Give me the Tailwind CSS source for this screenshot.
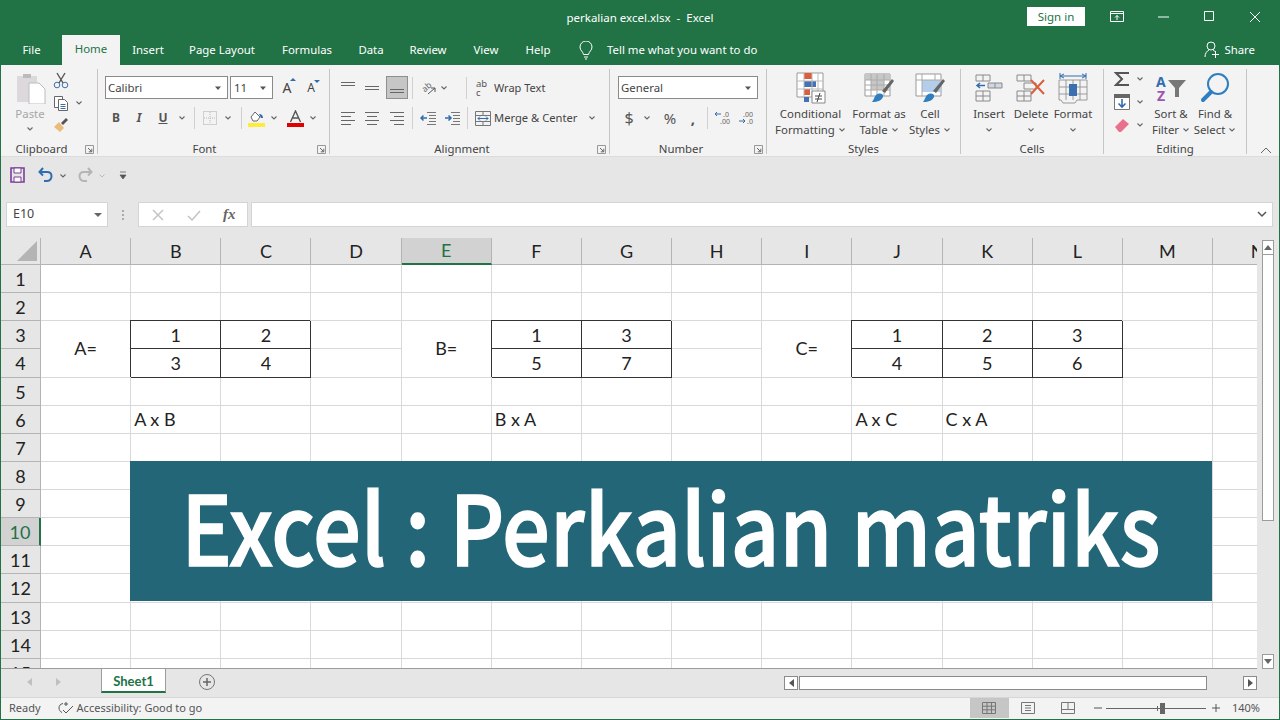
<!DOCTYPE html>
<html>
<head>
<meta charset="utf-8">
<title>perkalian excel.xlsx - Excel</title>
<script src="https://cdn.jsdelivr.net/npm/@tailwindcss/browser@4"></script>
</head>
<body class="m-0 overflow-hidden">
<svg class="hidden">
  <symbol id="chev" viewBox="0 0 8 6"><path d="M1.5 1.5 4 4l2.5-2.5" fill="none" stroke="#666" stroke-width="1.1"/></symbol>
  <symbol id="drop" viewBox="0 0 8 6"><path d="M1 1.5h6L4 5z" fill="#555"/></symbol>
  <symbol id="launch" viewBox="0 0 9 9"><path d="M.5.5h8v8h-8z" fill="none" stroke="#999"/><path d="M3 3l3.5 3.5M6.8 3.8v3H3.8" fill="none" stroke="#666"/></symbol>
  <symbol id="lines-top" viewBox="0 0 16 16"><path d="M1 2.500h14M1 5.500h14" stroke="#666" fill="none"/></symbol>
  <symbol id="lines-mid" viewBox="0 0 16 16"><path d="M1 6.500h14M1 9.500h14" stroke="#666" fill="none"/></symbol>
  <symbol id="lines-bot" viewBox="0 0 16 16"><path d="M1 9.500h14M1 12.500h14" stroke="#666" fill="none"/></symbol>
  <symbol id="al-left" viewBox="0 0 16 16"><path d="M1 2.500h14M1 6.500h10M1 10.500h14M1 14.500h10" stroke="#666" fill="none"/></symbol>
  <symbol id="al-center" viewBox="0 0 16 16"><path d="M1 2.500h14M3 6.500h10M1 10.500h14M3 14.500h10" stroke="#666" fill="none"/></symbol>
  <symbol id="al-right" viewBox="0 0 16 16"><path d="M1 2.500h14M5 6.500h10M1 10.500h14M5 14.500h10" stroke="#666" fill="none"/></symbol>
</svg>

<div class="w-[1280px] h-[720px] bg-[#217346] p-[1px] flex flex-col overflow-hidden text-[11.4px] text-[#444] font-['Noto_Sans',sans-serif]">

  <!-- title bar -->
  <div class="h-[35px] shrink-0 relative flex items-center justify-end text-white">
    <div class="absolute left-0 right-0 top-[8px] text-center text-[11.5px] leading-[18px] whitespace-pre">perkalian excel.xlsx  -  Excel</div>
    <div class="w-[58px] h-[19px] bg-white text-[#217346] text-[11.5px] leading-[19px] text-center mb-[4px]">Sign in</div>
    <div class="flex items-center mb-[4px]">
      <div class="w-[46px] ml-[9px] flex justify-center"><svg width="14" height="12" viewBox="0 0 14 12" fill="none" stroke="#fff"><path d="M.5.5h13v10H.5zM.5 2.500h13M7 9V4.500M5 6.500l2-2 2 2"/></svg></div>
      <div class="w-[46px] flex justify-center"><svg width="11" height="2"><path d="M0 1h11" stroke="#fff"/></svg></div>
      <div class="w-[46px] flex justify-center"><svg width="11" height="11"><path d="M.5.5h9v9h-9z" fill="none" stroke="#fff"/></svg></div>
      <div class="w-[46px] flex justify-center mr-[1px]"><svg width="12" height="12"><path d="M1 1l10 10M11 1 1 11" stroke="#fff"/></svg></div>
    </div>
  </div>

  <!-- ribbon tabs -->
  <div class="h-[29px] shrink-0 flex items-end text-white leading-[27px] relative">
    <div class="w-[61px] text-center h-[29px]">File</div>
    <div class="w-[58px] h-[30px] bg-[#f3f3f3] text-[#217346] text-center leading-[28px]">Home</div>
    <div class="w-[56px] text-center h-[29px]">Insert</div>
    <div class="w-[92px] text-center h-[29px]">Page Layout</div>
    <div class="w-[78px] text-center h-[29px]">Formulas</div>
    <div class="w-[50px] text-center h-[29px]">Data</div>
    <div class="w-[64px] text-center h-[29px]">Review</div>
    <div class="w-[52px] text-center h-[29px]">View</div>
    <div class="w-[52px] text-center h-[29px]">Help</div>
    <div class="w-[42px] h-[29px] flex justify-center pt-[5px] ml-[1px]"><svg width="14" height="19" viewBox="0 0 14 19" fill="none" stroke="#fff"><path d="M4.500 13.500C4 10.500 1 9.500 1 6a6 6 0 0 1 12 0c0 3.500-3 4.500-3.500 7.500zM5 16h4M6 18h2"/></svg></div>
    <div class="h-[29px]">Tell me what you want to do</div>
    <div class="flex-1"></div>
    <div class="h-[29px] flex items-center gap-[4px] pb-[2px] mr-[24px]">
      <svg width="16" height="17" viewBox="0 0 16 17" fill="none" stroke="#fff"><circle cx="7" cy="5" r="4"/><path d="M1 16c0-4 2-6 4-7M9 9c1 .3 2 1 2.500 2M8 13.500h7M11.500 10v7"/></svg>
      <span>Share</span>
    </div>
  </div>

  <!-- ribbon -->
  <div class="h-[92px] shrink-0 bg-[#f3f3f3] flex pt-[4px] pl-[1px] border-b border-[#dcdcdc]">

    <!-- clipboard -->
    <div class="w-[96px] h-[85px] border-r border-[#c6c6c6] flex flex-col">
      <div class="h-[76px] flex">
        <div class="w-[44px] ml-[6px] flex flex-col items-center pt-[3px]">
          <svg class="ml-[2px] shrink-0" width="30" height="32" viewBox="0 0 30 32"><path d="M1 4h20v26H1z" fill="#dcd8dc"/><path d="M7 2h8v4H7z" fill="#bbb"/><path d="M13 11h10l6 6v15H13z" fill="#fff" stroke="#bcbcbc"/></svg>
          <div class="leading-[16px] mt-[2px] text-[#a6a6a6]">Paste</div>
          <svg class="mt-[4px]" width="8" height="6"><use href="#chev"/></svg>
        </div>
        <div class="flex flex-col pt-[3px] gap-[6px] ml-[1px]">
          <svg width="16" height="17" viewBox="0 0 16 17" fill="none"><path d="M4 1l6 10M12 1 6 11" stroke="#555" stroke-width="1.400"/><circle cx="4" cy="13" r="2.800" stroke="#3f6fa8"/><circle cx="12" cy="13" r="2.800" stroke="#3f6fa8"/></svg>
          <div class="flex items-center gap-[6px]">
            <svg width="16" height="16" viewBox="0 0 16 16" fill="#fff" stroke="#666"><path d="M1.500 1.500h8v11h-8z"/><path d="M5.500 4.500h6l3 3v8h-9z"/><path d="M7.500 9.500h5M7.500 11.500h5M7.500 13.500h5" stroke="#3f6fa8"/></svg>
            <svg width="8" height="6"><use href="#chev"/></svg>
          </div>
          <svg width="16" height="16" viewBox="0 0 16 16"><path d="M1 10l5-5 5 6-4 4z" fill="#e8bd7c"/><path d="M8 6l5-5 2 2-5 5z" fill="#555"/></svg>
        </div>
      </div>
      <div class="h-[10px] relative flex items-center justify-center pr-[16px]">
        <span class="leading-[10px]">Clipboard</span>
        <svg class="absolute right-[3px] top-[1px]" width="9" height="9"><use href="#launch"/></svg>
      </div>
    </div>

    <!-- font -->
    <div class="w-[232px] h-[85px] border-r border-[#c6c6c6] flex flex-col pl-[7px]">
      <div class="h-[76px] flex flex-col pt-[7px]">
        <div class="flex items-center h-[23px]">
          <div class="w-[123px] h-[23px] bg-white border border-[#8a8a8a] flex items-center justify-between pl-[2px] pr-[5px]"><span>Calibri</span><svg width="8" height="6"><use href="#drop"/></svg></div>
          <div class="w-[43px] h-[23px] ml-[2px] bg-white border border-[#8a8a8a] flex items-center justify-between pl-[3px] pr-[5px]"><span>11</span><svg width="8" height="6"><use href="#drop"/></svg></div>
          <div class="w-[24px] ml-[2px] text-center text-[14px] leading-[20px] relative">A<span class="absolute right-[3px] top-[0px] w-0 h-0 border-x-[3px] border-x-transparent border-b-[3px] border-b-[#2f6db0]"></span></div>
          <div class="w-[24px] text-center text-[12px] leading-[20px] relative">A<span class="absolute right-[3px] top-[2px] w-0 h-0 border-x-[3px] border-x-transparent border-t-[3px] border-t-[#2f6db0]"></span></div>
        </div>
        <div class="flex items-center h-[22px] mt-[8px] text-[#555] text-[12px]">
          <div class="w-[22px] text-center font-bold">B</div>
          <div class="w-[24px] text-center italic font-bold">I</div>
          <div class="w-[24px] text-center font-bold underline">U</div>
          <div class="w-[14px] flex justify-center"><svg width="8" height="6"><use href="#chev"/></svg></div>
          <div class="w-px h-[22px] ml-[5px] bg-[#d0d0d0]"></div>
          <div class="w-[24px] ml-[3px] flex justify-center"><svg width="14" height="14" fill="none"><path d="M.5.5h13v13H.5z" stroke="#aaa" stroke-dasharray="1 1"/><path d="M7 1v12M1 7h12" stroke="#bbb" stroke-dasharray="1 1"/></svg></div>
          <div class="w-[12px] flex justify-center"><svg width="8" height="6"><use href="#chev"/></svg></div>
          <div class="w-px h-[22px] ml-[7px] bg-[#d0d0d0]"></div>
          <div class="w-[24px] ml-[2px] flex justify-center"><svg width="17" height="17" viewBox="0 0 17 17"><path d="M3 7l4-5 5 5-3 4H5z" fill="#fff" stroke="#666"/><path d="M11 4c3 0 4 2 4 4l-2 0z" fill="#2f6db0"/><path d="M0 13h17v4H0z" fill="#ffeb3b"/></svg></div>
          <div class="w-[12px] flex justify-center"><svg width="8" height="6"><use href="#chev"/></svg></div>
          <div class="w-[24px] ml-[3px] flex justify-center"><svg width="17" height="17" viewBox="0 0 17 17"><path d="M3.500 12 8.500 1l5 11M5.500 8h6" fill="none" stroke="#555" stroke-width="1.400"/><path d="M0 13h17v4H0z" fill="#e00000"/></svg></div>
          <div class="w-[12px] flex justify-center"><svg width="8" height="6"><use href="#chev"/></svg></div>
        </div>
      </div>
      <div class="h-[10px] relative flex items-center justify-center pr-[25px]">
        <span class="leading-[10px]">Font</span>
        <svg class="absolute right-[3px] top-[1px]" width="9" height="9"><use href="#launch"/></svg>
      </div>
    </div>

    <!-- alignment -->
    <div class="w-[280px] h-[85px] border-r border-[#c6c6c6] flex flex-col pl-[6px]">
      <div class="h-[76px] flex flex-col pt-[7px]">
        <div class="flex items-center h-[23px]">
          <div class="w-[24px] flex justify-center"><svg width="16" height="16"><use href="#lines-top"/></svg></div>
          <div class="w-[24px] flex justify-center"><svg width="16" height="16"><use href="#lines-mid"/></svg></div>
          <div class="w-[22px] h-[23px] ml-[2px] bg-[#c6c6c6] border border-[#8f8f8f] flex items-center justify-center"><svg width="16" height="16"><use href="#lines-bot"/></svg></div>
          <div class="w-px h-[22px] ml-[4px] bg-[#d0d0d0]"></div>
          <div class="w-[20px] ml-[6px] flex justify-center"><svg class="overflow-visible" width="18" height="18" viewBox="0 0 18 18" fill="none"><text x="2" y="10" font-size="8.500" fill="#666" font-family="Noto Sans" transform="rotate(-40 8 8)">ab</text><path d="M8 15l7-6M15 13V9h-4" stroke="#555"/></svg></div>
          <div class="w-[8px] ml-[1px] flex justify-center"><svg width="8" height="6"><use href="#chev"/></svg></div>
          <div class="w-px h-[22px] ml-[18px] bg-[#d0d0d0]"></div>
          <div class="w-[14px] ml-[9px] text-[9.5px] leading-[9px] text-[#555]">ab<br>c</div>
          <div class="ml-[4px] leading-[23px] text-[11px]">Wrap Text</div>
        </div>
        <div class="flex items-center h-[22px] mt-[8px]">
          <div class="w-[24px] flex justify-center"><svg width="16" height="16"><use href="#al-left"/></svg></div>
          <div class="w-[24px] flex justify-center"><svg width="16" height="16"><use href="#al-center"/></svg></div>
          <div class="w-[22px] ml-[2px] flex justify-center"><svg width="16" height="16"><use href="#al-right"/></svg></div>
          <div class="w-px h-[22px] ml-[4px] bg-[#d0d0d0]"></div>
          <div class="w-[20px] ml-[5px] flex justify-center"><svg width="16" height="14" viewBox="0 0 16 14" fill="none"><path d="M7 1.500h9M9 4.500h7M9 7.500h7M9 10.500h7M7 13.500h9" stroke="#777"/><path d="M7 7H1M3.500 4.500 1 7l2.500 2.500" stroke="#2f6db0" stroke-width="1.500"/></svg></div>
          <div class="w-[20px] ml-[4px] flex justify-center"><svg width="16" height="14" viewBox="0 0 16 14" fill="none"><path d="M7 1.500h9M9 4.500h7M9 7.500h7M9 10.500h7M7 13.500h9" stroke="#777"/><path d="M1 7h6M4.500 4.500 7 7 4.500 9.500" stroke="#2f6db0" stroke-width="1.500"/></svg></div>
          <div class="w-px h-[22px] ml-[5px] bg-[#d0d0d0]"></div>
          <div class="w-[16px] ml-[7px] flex justify-center"><svg width="16" height="15" viewBox="0 0 16 15" fill="none" stroke="#777"><path d="M.5.500h15v14H.5zM.5 4.500h15M.5 10.500h15M8 .5v4M8 10.500v4"/><path d="M3 7.500h10M5 5.500l-2 2 2 2M11 5.500l2 2-2 2" stroke="#2f6db0"/></svg></div>
          <div class="ml-[3px] leading-[22px] text-[11.2px] w-[88px] whitespace-nowrap">Merge &amp; Center</div>
          <div class="ml-[6px] w-[8px] flex justify-center"><svg width="8" height="6"><use href="#chev"/></svg></div>
        </div>
      </div>
      <div class="h-[10px] relative flex items-center justify-center pr-[21px]">
        <span class="leading-[10px]">Alignment</span>
        <svg class="absolute right-[3px] top-[1px]" width="9" height="9"><use href="#launch"/></svg>
      </div>
    </div>

    <!-- number -->
    <div class="w-[157px] h-[85px] border-r border-[#c6c6c6] flex flex-col pl-[8px]">
      <div class="h-[76px] flex flex-col pt-[7px]">
        <div class="w-[140px] h-[23px] bg-white border border-[#8a8a8a] flex items-center justify-between pl-[2px] pr-[5px]"><span>General</span><svg width="8" height="6"><use href="#drop"/></svg></div>
        <div class="flex items-center h-[22px] mt-[8px] text-[#555]">
          <div class="w-[22px] text-center text-[16px]">$</div>
          <div class="w-[14px] flex justify-center"><svg width="8" height="6"><use href="#chev"/></svg></div>
          <div class="w-[24px] ml-[4px] text-center text-[15px]">%</div>
          <div class="w-[22px] text-center text-[15px] font-bold leading-[14px]">,</div>
          <div class="w-px h-[22px] ml-[3px] bg-[#d0d0d0]"></div>
          <div class="w-[22px] ml-[4px] flex justify-center"><svg width="18" height="14" viewBox="0 0 18 14" fill="none"><path d="M7 3H1M3 1 1 3l2 2" stroke="#2f6db0"/><text x="9" y="6" font-size="7" fill="#666">.0</text><text x="6" y="13" font-size="7" fill="#666">.00</text></svg></div>
          <div class="w-[22px] ml-[2px] flex justify-center"><svg width="18" height="14" viewBox="0 0 18 14" fill="none"><text x="5" y="6" font-size="7" fill="#666">.00</text><path d="M1 10h6M5 8l2 2-2 2" stroke="#2f6db0"/><text x="9" y="13" font-size="7" fill="#666">.0</text></svg></div>
        </div>
      </div>
      <div class="h-[10px] relative flex items-center justify-center pr-[22px]">
        <span class="leading-[10px]">Number</span>
        <svg class="absolute right-[3px] top-[1px]" width="9" height="9"><use href="#launch"/></svg>
      </div>
    </div>

    <!-- styles -->
    <div class="w-[194px] h-[85px] border-r border-[#c6c6c6] flex flex-col">
      <div class="h-[76px] flex">
        <div class="w-[87px] flex flex-col items-center pt-[3px] leading-[16px]">
          <svg width="30" height="32" viewBox="0 0 30 32"><path d="M1 1h26v24H1z" fill="#fff" stroke="#999"/><path d="M8 1h8v6H8zM8 17h6v6H8z" fill="#d9603b"/><path d="M8 9h12v6H8zM8 25h5v5H8z" fill="#4472b5"/><path d="M1 9h26M1 17h26M8 1v24M16 1v24M22 1v24" stroke="#bbb" fill="none"/><path d="M16 19h13v12H16z" fill="#fff" stroke="#888"/><path d="M19 24h7M19 27h7M24 21l-3 9" stroke="#444" fill="none"/></svg>
          <div class="mt-[2px] whitespace-nowrap">Conditional</div>
          <div class="flex items-center gap-[3px] whitespace-nowrap">Formatting <svg width="8" height="6"><use href="#chev"/></svg></div>
        </div>
        <div class="w-[50px] flex flex-col items-center pt-[3px] leading-[16px]">
          <svg width="30" height="32" viewBox="0 0 30 32"><path d="M1 2h25v22H1z" fill="#fff" stroke="#999"/><path d="M1 2h25v6H1z" fill="#c7c7c7"/><path d="M7 8h13v10H7z" fill="#c7c7c7"/><path d="M1 8h25M1 13h25M1 18h25M7 2v22M13 2v22M20 2v22" stroke="#aaa" fill="none"/><path d="M18 19l10-12 2 2-9 12z" fill="#666"/><path d="M12 23c4-3 8-1 7 2s-5 5-11 5c2-2 2-5 4-7z" fill="#2f7ec0"/></svg>
          <div class="mt-[2px] whitespace-nowrap">Format as</div>
          <div class="flex items-center gap-[3px] whitespace-nowrap">Table <svg width="8" height="6"><use href="#chev"/></svg></div>
        </div>
        <div class="w-[52px] flex flex-col items-center pt-[3px] leading-[16px]">
          <svg width="30" height="32" viewBox="0 0 30 32"><path d="M1 2h25v22H1z" fill="#fff" stroke="#999"/><path d="M7 8h19v12H7z" fill="#b4cde8"/><path d="M1 8h25M7 2v22M20 2v6" stroke="#aaa" fill="none"/><path d="M18 19l10-12 2 2-9 12z" fill="#666"/><path d="M12 23c4-3 8-1 7 2s-5 5-11 5c2-2 2-5 4-7z" fill="#2f7ec0"/></svg>
          <div class="mt-[2px] whitespace-nowrap">Cell</div>
          <div class="flex items-center gap-[3px] whitespace-nowrap">Styles <svg width="8" height="6"><use href="#chev"/></svg></div>
        </div>
      </div>
      <div class="h-[10px] flex items-center justify-center"><span class="leading-[10px]">Styles</span></div>
    </div>

    <!-- cells -->
    <div class="w-[143px] h-[85px] border-r border-[#c6c6c6] flex flex-col pl-[7px]">
      <div class="h-[76px] flex">
        <div class="w-[42px] flex flex-col items-center pt-[3px] leading-[16px]">
          <svg width="30" height="32" viewBox="0 0 30 32" fill="none" stroke="#8a8a8a"><path d="M2 3h14v6H2zM9 3v6M2 19h14v10H2zM2 24h14M9 19v10"/><path d="M14 11h14v5H14zM21 11v5" fill="#cfd8e2"/><path d="M11 13.500H3M6 11l-3 2.500L6 16" stroke="#2f6db0" stroke-width="1.500"/></svg>
          <div class="mt-[2px]">Insert</div>
          <svg class="mt-[5px]" width="8" height="6"><use href="#chev"/></svg>
        </div>
        <div class="w-[42px] flex flex-col items-center pt-[3px] leading-[16px]">
          <svg width="32" height="32" viewBox="0 0 32 32" fill="none" stroke="#8a8a8a"><path d="M2 3h14v6H2zM9 3v6M2 19h14v10H2zM2 24h14M9 19v10M9 11h12v6H9z"/><path d="M16 8l13 14M29 8 16 22" stroke="#d9603b" stroke-width="2"/></svg>
          <div class="mt-[2px]">Delete</div>
          <svg class="mt-[5px]" width="8" height="6"><use href="#chev"/></svg>
        </div>
        <div class="w-[42px] flex flex-col items-center pt-[3px] leading-[16px]">
          <svg width="30" height="32" viewBox="0 0 30 32" fill="none" stroke="#9a9a9a"><path d="M1 8h28v20H19l-2 3H5l-2-3H1zM8 8v20M15 8v20M22 8v20M1 15h28M1 22h28"/><path d="M11 12h8v12h-8z" fill="#3a6fb0" stroke="none"/><path d="M2 4h26M2 1v6M28 1v6M6 2 2 4l4 2M24 2l4 2-4 2" stroke="#2f6db0"/></svg>
          <div class="mt-[2px]">Format</div>
          <svg class="mt-[5px]" width="8" height="6"><use href="#chev"/></svg>
        </div>
      </div>
      <div class="h-[10px] flex items-center justify-center pr-[7px]"><span class="leading-[10px]">Cells</span></div>
    </div>

    <!-- editing -->
    <div class="w-[143px] h-[85px] border-r border-[#c6c6c6] flex flex-col">
      <div class="h-[76px] flex">
        <div class="w-[36px] ml-[8px] flex flex-col pt-[2px] gap-[7px]">
          <div class="flex items-center h-[16px]"><div class="w-[20px] flex justify-center"><svg width="16" height="16" viewBox="0 0 16 16" fill="none" stroke="#555" stroke-width="2"><path d="M15 2H2l6 6-6 6h13"/></svg></div><div class="ml-[4px]"><svg width="8" height="6"><use href="#chev"/></svg></div></div>
          <div class="flex items-center h-[16px]"><div class="w-[20px] flex justify-center"><svg width="16" height="16" viewBox="0 0 16 16" fill="none"><path d="M.5.5h15v15H.5z" fill="#fff" stroke="#777"/><path d="M0 0h16v4H0z" fill="#666"/><path d="M8 5v8M4.500 9.500 8 13l3.500-3.500" stroke="#2f6db0" stroke-width="1.600"/></svg></div><div class="ml-[4px]"><svg width="8" height="6"><use href="#chev"/></svg></div></div>
          <div class="flex items-center h-[16px]"><div class="w-[20px] flex justify-center"><svg width="16" height="14" viewBox="0 0 16 14"><path d="M1 9l8-8 6 5-8 8H5z" fill="#e8718d"/></svg></div><div class="ml-[4px]"><svg width="8" height="6"><use href="#chev"/></svg></div></div>
        </div>
        <div class="w-[46px] flex flex-col items-center pt-[3px] leading-[16px]">
          <svg class="overflow-visible" width="32" height="32" viewBox="0 0 32 32" fill="none"><text x="1" y="15" font-size="14" font-weight="700" fill="#2f6db0" font-family="Noto Sans">A</text><text x="2" y="29" font-size="14" font-weight="700" fill="#9a55b5" font-family="Noto Sans">Z</text><path d="M13 8h18l-7 8v9h-4v-9z" fill="#777"/></svg>
          <div class="mt-[2px] whitespace-nowrap">Sort &amp;</div>
          <div class="flex items-center gap-[3px] whitespace-nowrap">Filter <svg width="8" height="6"><use href="#chev"/></svg></div>
        </div>
        <div class="w-[42px] flex flex-col items-center pt-[3px] leading-[16px]">
          <svg width="30" height="32" viewBox="0 0 30 32" fill="none" stroke="#2f7ec0"><circle cx="18" cy="12" r="10" stroke-width="2"/><path d="M11 20 3 28" stroke-width="4" stroke-linecap="round"/></svg>
          <div class="mt-[2px] whitespace-nowrap">Find &amp;</div>
          <div class="flex items-center gap-[3px] whitespace-nowrap">Select <svg width="8" height="6"><use href="#chev"/></svg></div>
        </div>
      </div>
      <div class="h-[10px] flex items-center justify-center"><span class="leading-[10px]">Editing</span></div>
    </div>

    <div class="flex-1 flex items-end justify-end pb-[2px] pr-[7px]"><svg width="12" height="7"><path d="M1 6l5-5 5 5" fill="none" stroke="#666"/></svg></div>
  </div>

  <!-- quick access -->
  <div class="h-[43px] shrink-0 bg-[#e6e6e6] flex items-start pt-[10px] pl-[9px]">
    <svg width="15" height="16" viewBox="0 0 15 16" fill="none"><path d="M1 1h13v14H1z" stroke="#7c3f98" stroke-width="1.600"/><path d="M4 1h7v5H4zM4 10h7v5H4z" fill="#fff" stroke="#7c3f98"/></svg>
    <svg class="ml-[13px]" width="16" height="16" viewBox="0 0 16 16" fill="none" stroke="#2f6db0" stroke-width="2"><path d="M5 1 1.500 5 5 8.500M2 5h7c6 0 6 8 0 9H6"/></svg>
    <svg class="ml-[5px] mt-[6px]" width="8" height="6"><use href="#chev"/></svg>
    <svg class="ml-[10px]" width="16" height="16" viewBox="0 0 16 16" fill="none" stroke="#b5b5b5" stroke-width="2"><path d="M11 1l3.500 4L11 8.500M14 5H7c-6 0-6 8 0 9h3"/></svg>
    <svg class="ml-[5px] mt-[6px]" width="8" height="6"><path d="M1.500 1.500 4 4l2.500-2.500" fill="none" stroke="#bbb"/></svg>
    <svg class="ml-[13px] mt-[4px]" width="8" height="9"><path d="M1 1h6M1 4h6l-3 4z" fill="#555" stroke="#555" stroke-width=".7"/></svg>
  </div>

  <!-- formula bar -->
  <div class="h-[38px] shrink-0 bg-[#e6e6e6] flex items-start pl-[5px] pr-[6px] pt-[2px]">
    <div class="w-[102px] h-[25px] bg-white border border-[#d4d4d4] flex items-center justify-between pl-[6px] pr-[4px]"><span class="text-[12.5px]">E10</span><svg width="10" height="6"><path d="M1 1h8L5 5z" fill="#666"/></svg></div>
    <div class="w-[30px] h-[25px] flex items-center justify-center"><svg width="2" height="10"><path d="M1 0v2M1 4v2M1 8v2" stroke="#aaa" stroke-width="2"/></svg></div>
    <div class="w-[110px] h-[25px] bg-white border border-[#d4d4d4] flex items-center">
      <svg class="ml-[13px]" width="12" height="12"><path d="M1 1l10 10M11 1 1 11" stroke="#c4c4c4" stroke-width="1.500"/></svg>
      <svg class="ml-[23px]" width="14" height="12"><path d="M1 7l4 4 8-9" stroke="#c4c4c4" stroke-width="1.500" fill="none"/></svg>
      <span class="ml-[22px] text-[15px] italic font-bold font-['Liberation_Serif',serif] text-[#666]">fx</span>
    </div>
    <div class="flex-1 ml-[3px] h-[25px] bg-white border border-[#d4d4d4] flex items-center justify-end pr-[5px]"><svg width="10" height="7"><path d="M1 1l4 4 4-4" fill="none" stroke="#555" stroke-width="1.500"/></svg></div>
  </div>

  <!-- sheet + vertical scrollbar -->
  <div class="flex-1 min-h-0 flex">
    <div class="relative w-[1256px] overflow-hidden bg-white border-b border-[#9c9c9c]">
      <div id="sheet" class="grid grid-cols-[40px_repeat(14,90.17px)] grid-rows-[27px_repeat(15,28.13px)] font-['Lato',sans-serif] text-[18px] text-[#222]"></div>
      <!-- title overlay -->
      <div class="absolute left-[129px] top-[223px] w-[1082px] h-[140px] bg-[#236678] flex items-center justify-center pb-[14px] text-white text-[97px] font-medium whitespace-nowrap font-['Noto_Sans_CJK_TC',sans-serif] [-webkit-text-stroke:1.5px_white]"><span class="inline-block shrink-0 scale-x-[0.873]">Excel : Perkalian matriks</span></div>
    </div>
    <div class="flex-1 bg-[#e6e6e6] flex flex-col px-[5px] pt-[2px]">
      <div class="h-[15px] bg-white border border-[#9c9c9c] flex items-center justify-center shrink-0"><svg width="8" height="5"><path d="M0 5h8L4 0z" fill="#666"/></svg></div>
      <div class="h-[266px] bg-white border-x border-b border-[#9c9c9c] shrink-0"></div>
      <div class="flex-1"></div>
      <div class="h-[15px] bg-white border border-[#9c9c9c] flex items-center justify-center shrink-0"><svg width="8" height="5"><path d="M0 0h8L4 5z" fill="#666"/></svg></div>
    </div>
  </div>

  <!-- sheet tabs -->
  <div class="h-[28px] shrink-0 bg-[#e6e6e6] flex items-start">
    <div class="w-[100px] h-[26px] flex items-center">
      <svg class="ml-[26px]" width="6" height="8"><path d="M5 0v8L0 4z" fill="#c0c0c0"/></svg>
      <svg class="ml-[22px]" width="6" height="8"><path d="M1 0v8l5-4z" fill="#c0c0c0"/></svg>
    </div>
    <div class="w-[65px] h-[25px] bg-white border-x border-[#9c9c9c] border-b-2 border-b-[#217346] text-center text-[#217346] font-bold text-[13px] leading-[27px] font-['Lato',sans-serif] -mt-px">Sheet1</div>
    <div class="ml-[33px] mt-[5px] w-[16px] h-[16px] rounded-full border border-[#777] flex items-center justify-center"><svg width="8" height="8"><path d="M4 0v8M0 4h8" stroke="#666" stroke-width="1.500"/></svg></div>
    <div class="flex-1"></div>
    <div class="flex items-center mt-[7px] mr-[22px]">
      <div class="h-[14px] w-[14px] bg-white border border-[#8a8a8a] flex items-center justify-center"><svg width="5" height="8"><path d="M5 0v8L0 4z" fill="#555"/></svg></div>
      <div class="h-[14px] w-[408px] ml-[1px] bg-white border border-[#8a8a8a]"></div>
      <div class="w-[36px]"></div>
      <div class="h-[14px] w-[14px] bg-white border border-[#8a8a8a] flex items-center justify-center"><svg width="5" height="8"><path d="M0 0v8l5-4z" fill="#555"/></svg></div>
    </div>
  </div>

  <!-- status bar -->
  <div class="h-[22px] shrink-0 bg-[#f3f3f3] border-t border-[#d6d6d6] flex items-center text-[11px] text-[#555] pb-[1px]">
    <span class="ml-[8px]">Ready</span>
    <svg class="ml-[17px]" width="16" height="15" viewBox="0 0 16 15" fill="none" stroke="#555"><path d="M5 2.500C2 3 1 5 1 7s1 3.500 3 4.500M8 1v4M6 3h4M5 9l3 3 7-7" /></svg>
    <span class="ml-[3px]">Accessibility: Good to go</span>
    <div class="flex-1"></div>
    <div class="w-[39px] h-[20px] mr-[-1px] bg-[#c6c6c6] flex items-center justify-center"><svg width="14" height="12" fill="none" stroke="#777"><path d="M.5.500h13v11H.5zM.5 4.200h13M.5 7.800h13M5 .5v11M9.500.5v11"/></svg></div>
    <div class="w-[40px] flex justify-center"><svg width="14" height="12" fill="none" stroke="#777"><path d="M.5.500h13v11H.5zM4 3.500h6M4 6h6M4 8.500h6"/></svg></div>
    <div class="w-[40px] flex justify-center"><svg width="14" height="12" fill="none" stroke="#777"><path d="M.5.500h13v11H.5zM.5 7.500h13M7 .5v7"/></svg></div>
    <svg class="ml-[6px]" width="8" height="2"><path d="M0 1h8" stroke="#555"/></svg>
    <div class="relative w-[100px] h-[1px] bg-[#666] ml-[4px]"><div class="absolute left-[51px] -top-[2px] w-px h-[5px] bg-[#666]"></div><div class="absolute left-[54px] -top-[5px] w-[5px] h-[11px] bg-[#666]"></div></div>
    <svg class="ml-[6px]" width="8" height="8"><path d="M0 4h8M4 0v8" stroke="#555"/></svg>
    <span class="ml-[12px] mr-[19px]">140%</span>
  </div>
</div>

<script type="text/javascript">
    const COLS = ["A", "B", "C", "D", "E", "F", "G", "H", "I", "J", "K", "L", "M", "N"];
    const ROWS = 15;

    // cells with a box border
    const boxed = {B3: "1", C3: "2", B4: "3", C4: "4", F3: "1", G3: "3", F4: "5", G4: "7", J3: "1", K3: "2", L3: "3", J4: "4", K4: "5", L4: "6"};
    // plain labels
    const labels = {B6: "A x B", F6: "B x A", J6: "A x C", K6: "C x A"};
    // vertically merged labels
    const merged = {A3: "A=", E3: "B=", I3: "C="};
    const covered = ["A4", "E4", "I4"];

    let out = `<div class="bg-[#e6e6e6] border-r border-b border-[#b4b4b4] relative"><span class="absolute right-[3px] bottom-[3px] w-0 h-0 border-l-[20px] border-l-transparent border-b-[20px] border-b-[#b4b4b4]"></span></div>`;
    COLS.forEach(col => {
        const selected = col === "E";
        out += selected
            ? `<div class="bg-[#d2d2d2] border-r border-[#b4b4b4] border-b-2 border-b-[#217346] flex items-center justify-center text-[#217346]">${col}</div>`
            : `<div class="bg-[#e6e6e6] border-r border-b border-[#b4b4b4] flex items-center justify-center">${col}</div>`;
    });

    for (let row = 1; row <= ROWS; row++) {
        out += row === 10
            ? `<div class="bg-[#d2d2d2] border-r-2 border-r-[#217346] border-b border-[#b4b4b4] flex items-center justify-center pt-[2px] text-[#217346]">${row}</div>`
            : `<div class="bg-[#e6e6e6] border-r border-b border-[#b4b4b4] flex items-center justify-center pt-[2px]">${row}</div>`;
        COLS.forEach(col => {
            const key = col + row;
            if (covered.includes(key)) return;
            if (boxed[key]) {
                out += `<div class="relative z-10 border-r border-b border-[#333] shadow-[-1px_-1px_0_#333] flex items-center justify-center pt-[1px]">${boxed[key]}</div>`;
            } else if (merged[key]) {
                out += `<div class="row-span-2 border-r border-b border-[#d9d9d9] flex items-center justify-center">${merged[key]}</div>`;
            } else if (labels[key]) {
                out += `<div class="border-r border-b border-[#d9d9d9] flex items-center pl-[3px] pt-[1px]">${labels[key]}</div>`;
            } else {
                out += `<div class="border-r border-b border-[#d9d9d9]"></div>`;
            }
        });
    }
    document.querySelector("#sheet").innerHTML = out;
</script>
</body>
</html>
